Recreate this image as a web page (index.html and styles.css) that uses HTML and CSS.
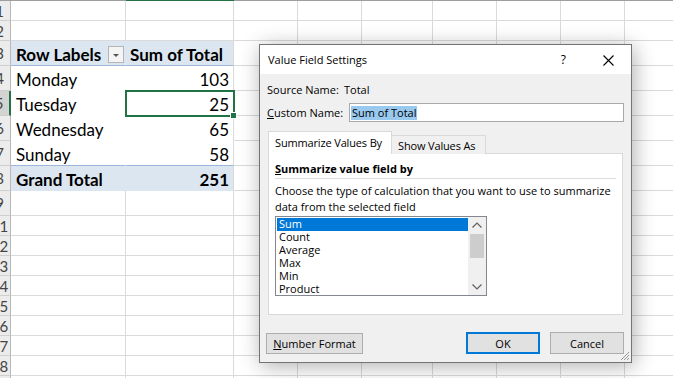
FILE: index.html
```html
<!DOCTYPE html>
<html>
<head>
<meta charset="utf-8">
<link rel="stylesheet" href="styles.css">
</head>
<body>
<div class="sheet">
  <i class="tb"></i><i class="tb"></i><i class="tb tbg"></i><i class="tb"></i><i class="tb"></i><i class="tb"></i><i class="tb"></i><i class="tb"></i><i class="tb"></i><i class="tb"></i>

  <i class="rh">1</i><i></i><i></i><i></i><i></i><i></i><i></i><i></i><i></i><i></i>
  <i class="rh">2</i><i></i><i></i><i></i><i></i><i></i><i></i><i></i><i></i><i></i>

  <i class="rh">3</i>
  <div class="pv hd ca"><span class="bold">Row Labels</span><span class="dd"></span></div>
  <div class="pv hd cb"><span class="bold">Sum of Total</span></div>
  <i></i><i></i><i></i><i></i><i></i><i></i><i></i>

  <i class="rh">4</i>
  <div class="pv ca">Monday</div>
  <div class="pv cb num">103</div>
  <i></i><i></i><i></i><i></i><i></i><i></i><i></i>

  <i class="rh on">5</i>
  <div class="pv ca">Tuesday</div>
  <div class="pv cb num sel">25</div>
  <i></i><i></i><i></i><i></i><i></i><i></i><i></i>

  <i class="rh">6</i>
  <div class="pv ca">Wednesday</div>
  <div class="pv cb num">65</div>
  <i></i><i></i><i></i><i></i><i></i><i></i><i></i>

  <i class="rh">7</i>
  <div class="pv ca last">Sunday</div>
  <div class="pv cb num last">58</div>
  <i></i><i></i><i></i><i></i><i></i><i></i><i></i>

  <i class="rh">8</i>
  <div class="pv gt ca"><span class="bold">Grand Total</span></div>
  <div class="pv gt cb num"><span class="bold">251</span></div>
  <i></i><i></i><i></i><i></i><i></i><i></i><i></i>

  <i class="rh">9</i><i></i><i></i><i></i><i></i><i></i><i></i><i></i><i></i><i></i>
  <i class="rh">11</i><i></i><i></i><i></i><i></i><i></i><i></i><i></i><i></i><i></i>
  <i class="rh">12</i><i></i><i></i><i></i><i></i><i></i><i></i><i></i><i></i><i></i>
  <i class="rh">13</i><i></i><i></i><i></i><i></i><i></i><i></i><i></i><i></i><i></i>
  <i class="rh">14</i><i></i><i></i><i></i><i></i><i></i><i></i><i></i><i></i><i></i>
  <i class="rh">15</i><i></i><i></i><i></i><i></i><i></i><i></i><i></i><i></i><i></i>
  <i class="rh">16</i><i></i><i></i><i></i><i></i><i></i><i></i><i></i><i></i><i></i>
  <i class="rh">17</i><i></i><i></i><i></i><i></i><i></i><i></i><i></i><i></i><i></i>
  <i class="rh">18</i><i></i><i></i><i></i><i></i><i></i><i></i><i></i><i></i><i></i>
  <i class="rh">19</i><i></i><i></i><i></i><i></i><i></i><i></i><i></i><i></i><i></i>
</div>

<div class="dlg">
  <div class="titlebar">
    <span class="title">Value Field Settings</span>
    <span class="help">?</span>
    <svg class="close" width="11" height="11" viewBox="0 0 11 11"><path d="M0.5 0.5 L10.5 10.5 M10.5 0.5 L0.5 10.5" stroke="#000" stroke-width="1.1" fill="none"/></svg>
  </div>
  <div class="dbody">
    <div class="src"><span class="lbl">Source Name:</span><span>Total</span></div>
    <div class="cust"><span class="lbl2"><u>C</u>ustom Name:</span><div class="inp"><span class="hl">Sum of Total</span></div></div>
    <div class="tabs">
      <div class="tab on">Summarize Values By</div>
      <div class="tab">Show Values As</div>
    </div>
    <div class="panel">
      <div class="ph"><u>S</u>ummarize value field by</div>
      <div class="sep"></div>
      <div class="desc">Choose the type of calculation that you want to use to summarize<br>data from the selected field</div>
      <div class="list">
        <div class="items">
          <div class="it act">Sum</div>
          <div class="it">Count</div>
          <div class="it">Average</div>
          <div class="it">Max</div>
          <div class="it">Min</div>
          <div class="it">Product</div>
        </div>
        <div class="sb">
          <svg class="arr" width="18" height="17" viewBox="0 0 18 17"><path d="M4.5 10.5 L9 6 L13.5 10.5" stroke="#606060" stroke-width="1.2" fill="none"/></svg>
          <div class="thumb"></div>
          <div class="track"></div>
          <svg class="arr" width="18" height="17" viewBox="0 0 18 17"><path d="M4.5 6.5 L9 11 L13.5 6.5" stroke="#606060" stroke-width="1.2" fill="none"/></svg>
        </div>
      </div>
    </div>
    <div class="btns">
      <div class="btn nf"><u>N</u>umber Format</div>
      <div class="btn ok">OK</div>
      <div class="btn">Cancel</div>
    </div>
  </div>
  <svg class="grip" width="10" height="10" viewBox="0 0 10 10"><path d="M9 1 L1 9 M9 4 L4 9 M9 7 L7 9" stroke="#9a9a9a" stroke-width="1" fill="none"/></svg>
</div>
</body>
</html>
```

FILE: styles.css
```css
html, body {
  margin: 0;
  padding: 0;
}
body {
  width: 673px;
  height: 378px;
  overflow: hidden;
  background: #ffffff;
  position: relative;
  font-family: Lato, "Liberation Sans", sans-serif;
}

/* ---------- worksheet ---------- */
.sheet {
  display: grid;
  grid-template-columns: 28px 115px 108px 64px 64px 71px 64px 64px 64px 64px;
  grid-template-rows: 1px 20px 20px repeat(7, 25px) repeat(9, 20px);
  margin-left: -17px;
  width: 706px;
}
.sheet > i,
.sheet > div {
  display: flex;
  align-items: center;
  box-sizing: border-box;
  border-right: 1px solid #dadada;
  border-bottom: 1px solid #dadada;
  font-style: normal;
  font-size: 17px;
  color: #000;
  min-width: 0;
}
.sheet > .tb {
  border: none;
  background: #9e9e9e;
}
.sheet > .tbg {
  background: #217346;
}
.sheet > .rh {
  background: #ececec;
  border-right-color: #b8b8b8;
  border-bottom-color: #cfcfcf;
  color: #444;
  font-size: 15px;
  justify-content: center;
  padding-left: 6px;
  overflow: hidden;
}
.sheet > .rh.on {
  background: #d3d3d3;
  border-right: 2px solid #217346;
}

.sheet > .pv {
  background: #ffffff;
  border-bottom-color: #ffffff;
  padding: 2px 4px 0 5px;
  white-space: nowrap;
}
.sheet > .pv.ca {
  border-right-color: #ffffff;
}
.sheet > .pv.hd {
  background: #dce6f1;
  border-bottom-color: #9db7d8;
}
.sheet > .pv.hd.ca {
  border-right-color: #dce6f1;
  padding-right: 1px;
}
.sheet > .pv.hd.cb {
  padding-left: 4px;
}
.sheet > .pv.last {
  border-bottom-color: #9db7d8;
}
.sheet > .pv.gt {
  background: #dce6f1;
  border-bottom-color: #dce6f1;
}
.sheet > .pv.gt.ca {
  border-right-color: #dce6f1;
}
.sheet > .num {
  justify-content: flex-end;
}
.bold {
  font-weight: 700;
}
.dd {
  margin-left: auto;
  width: 16px;
  height: 17px;
  box-sizing: border-box;
  border: 1px solid #b5b5b5;
  background: #f4f4f4;
  display: flex;
  align-items: center;
  justify-content: center;
  margin-top: 1px;
}
.dd::after {
  content: "";
  border-left: 3px solid transparent;
  border-right: 3px solid transparent;
  border-top: 3px solid #555;
  margin-top: 1px;
}
.sheet > .sel {
  position: relative;
  overflow: visible;
}
.sel::after {
  content: "";
  position: absolute;
  left: -1px;
  top: -1px;
  right: -2px;
  bottom: -2px;
  border: 2px solid #217346;
}
.sel::before {
  content: "";
  position: absolute;
  right: -4px;
  bottom: -4px;
  width: 5px;
  height: 5px;
  background: #217346;
  border: 1px solid #fff;
  z-index: 2;
}

/* ---------- dialog ---------- */
.dlg {
  position: absolute;
  left: 259px;
  top: 44px;
  width: 373px;
  height: 319px;
  box-sizing: border-box;
  border: 1px solid #747474;
  background: #f0f0f0;
  box-shadow: 2px 3px 20px rgba(0, 0, 0, 0.32);
  font-family: "Open Sans", "Noto Sans", sans-serif;
  font-size: 11px;
  color: #000;
  display: flex;
  flex-direction: column;
  white-space: nowrap;
}
.titlebar {
  height: 29px;
  background: #ffffff;
  display: flex;
  align-items: center;
  padding: 0 17px 0 8px;
  flex-shrink: 0;
}
.title {
  font-size: 11px;
}
.help {
  margin-left: auto;
  font-size: 12px;
  margin-right: 37px;
}
.close {
  display: block;
  margin-top: 1px;
}
.dbody {
  padding: 0 7px;
  display: flex;
  flex-direction: column;
  flex: 1;
}
.src {
  margin-top: 7px;
  height: 16px;
  display: flex;
  align-items: center;
}
.lbl {
  width: 77px;
}
.cust {
  margin-top: 6px;
  display: flex;
  align-items: center;
}
.lbl2 {
  width: 82px;
}
.inp {
  flex: 1;
  height: 19px;
  box-sizing: border-box;
  border: 1px solid #a9a9a9;
  background: #fff;
  display: flex;
  align-items: center;
  padding-left: 1px;
}
.hl {
  background: #99c9ef;
  line-height: 14px;
  padding: 0 1px;
}
.tabs {
  margin-top: 9px;
  margin-left: 1px;
  display: flex;
  align-items: flex-end;
  position: relative;
  z-index: 1;
  margin-bottom: -1px;
}
.tab {
  height: 19px;
  box-sizing: border-box;
  border: 1px solid #d9d9d9;
  border-bottom: none;
  background: #f0f0f0;
  padding: 0 0 0 6px;
  display: flex;
  align-items: center;
  width: 95px;
  margin-left: -1px;
  letter-spacing: -0.15px;
}
.tab.on {
  height: 23px;
  background: #ffffff;
  width: 124px;
  margin-left: 0;
  padding-left: 6px;
  padding-bottom: 1px;
}
.panel {
  margin: 0 1px 0 1px;
  height: 162px;
  box-sizing: border-box;
  background: #ffffff;
  border: 1px solid #d9d9d9;
  padding: 7px 6px 0 6px;
}
.ph {
  font-weight: 700;
  line-height: 16px;
}
.sep {
  height: 1px;
  background: #dcdcdc;
  margin-top: 1px;
}
.desc {
  line-height: 16px;
  margin-top: 4px;
}
.list {
  margin-top: 1px;
  width: 212px;
  height: 80px;
  box-sizing: border-box;
  border: 1px solid #828790;
  display: flex;
  padding: 1px 1px 1px 1px;
  background: #fff;
}
.items {
  flex: 1;
}
.it {
  height: 13px;
  line-height: 12px;
  padding-left: 2px;
}
.it.act {
  background: #0078d7;
  color: #fff;
}
.sb {
  width: 18px;
  display: flex;
  flex-direction: column;
  background: #f0f0f0;
  margin: -1px -1px -1px 0;
}
.arr {
  display: block;
  flex-shrink: 0;
}
.thumb {
  margin: 0 2px;
  height: 24px;
  background: #cdcdcd;
}
.track {
  flex: 1;
}
.btns {
  margin-top: auto;
  margin-bottom: 8px;
  display: flex;
  align-items: center;
}
.btn {
  height: 22px;
  box-sizing: border-box;
  border: 1px solid #adadad;
  background: #e1e1e1;
  display: flex;
  align-items: center;
  justify-content: center;
  width: 74px;
}
.btn.nf {
  width: 97px;
  height: 21px;
  margin-left: -1px;
  margin-right: auto;
}
.btn.ok {
  border: 2px solid #0078d7;
  margin-right: 10px;
}
.grip {
  position: absolute;
  right: 1px;
  bottom: 1px;
}
```
